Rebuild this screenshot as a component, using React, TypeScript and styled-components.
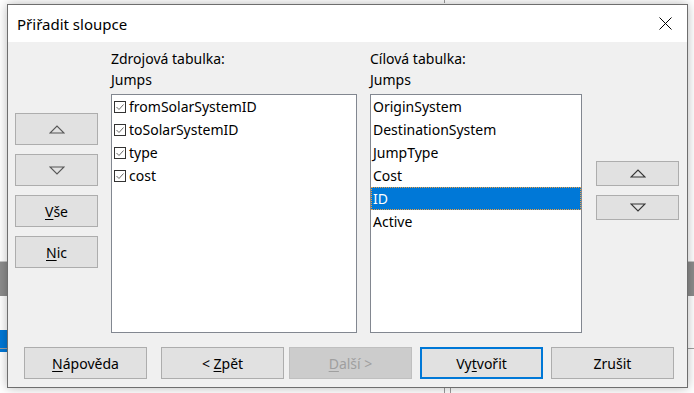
import React from "react";
import styled, { createGlobalStyle } from "styled-components";

const Global = createGlobalStyle`
  html, body { margin: 0; padding: 0; }
  body {
    width: 694px; height: 393px; overflow: hidden; background: #ffffff;
    font-family: "Noto Sans", "Segoe UI", "Liberation Sans", sans-serif;
  }
`;

const Desktop = styled.div`
  position: relative;
  width: 694px;
  height: 393px;
  overflow: hidden;
  background: #ffffff;
`;

const Backdrop = styled.div`
  display: flex;
  flex-direction: column;
  width: 100%;
  height: 100%;
`;

const VLineStrip = styled.div<{ $h: number }>`
  height: ${(p) => p.$h}px;
  display: flex;
  gap: 5px;
  padding-left: 444px;
`;

const VLine = styled.div`
  width: 1px;
  height: 100%;
  background: #9a9a9a;
`;

const Spacer = styled.div<{ $h: number }>`
  height: ${(p) => p.$h}px;
  flex: none;
`;

const HLine = styled.div<{ $c: string }>`
  height: 1px;
  background: ${(p) => p.$c};
  flex: none;
`;

const Bar = styled.div<{ $h: number; $c: string; $w?: number }>`
  height: ${(p) => p.$h}px;
  width: ${(p) => (p.$w ? `${p.$w}px` : "100%")};
  background: ${(p) => p.$c};
  flex: none;
`;

const Dialog = styled.div`
  position: absolute;
  left: 7px;
  top: 4px;
  width: 681px;
  height: 384px;
  box-sizing: border-box;
  border: 1px solid #6e6e6e;
  background: #f0f0f0;
  box-shadow: 0 0 10px rgba(0, 0, 0, 0.28);
  display: flex;
  flex-direction: column;
`;

const TitleBar = styled.div`
  height: 37px;
  flex: none;
  background: #ffffff;
  display: flex;
  align-items: center;
  justify-content: space-between;
  padding: 0 15px 0 9px;
  font-size: 15px;
  color: #000;
`;

const Body = styled.div`
  flex: 1;
  display: flex;
  flex-direction: column;
  padding: 6px 12px 7px 7px;
`;

const Columns = styled.div`
  display: flex;
  align-items: center;
  height: 285px;
`;

const SideButtons = styled.div<{ $gap: number; $ml: number }>`
  display: flex;
  flex-direction: column;
  gap: ${(p) => p.$gap}px;
  width: 83px;
  margin-left: ${(p) => p.$ml}px;
  flex: none;
`;

const TableColumn = styled.div<{ $w: number; $ml: number }>`
  width: ${(p) => p.$w}px;
  margin-left: ${(p) => p.$ml}px;
  align-self: stretch;
  display: flex;
  flex-direction: column;
  flex: none;
`;

const Label = styled.div`
  font-size: 14px;
  line-height: 21px;
  height: 21px;
  color: #000;
`;

const ListBox = styled.div`
  margin-top: 4px;
  flex: 1;
  background: #ffffff;
  border: 1px solid #828790;
  box-sizing: border-box;
  padding: 0;
  display: flex;
  flex-direction: column;
`;

const Row = styled.div<{ $sel?: boolean }>`
  height: 23px;
  flex: none;
  display: flex;
  align-items: center;
  font-size: 14px;
  padding-left: 2px;
  box-sizing: border-box;
  color: ${(p) => (p.$sel ? "#ffffff" : "#000000")};
  background: ${(p) => (p.$sel ? "#0078d7" : "transparent")};
  outline: ${(p) => (p.$sel ? "1px dotted #f0a040" : "none")};
  outline-offset: -1px;
  gap: 3px;
`;

const CheckBox = styled.span`
  width: 12px;
  height: 12px;
  box-sizing: border-box;
  border: 1px solid #333333;
  background: #ffffff;
  display: inline-flex;
  align-items: center;
  justify-content: center;
  flex: none;
`;

const Btn = styled.button<{ $h?: number; $w?: number; $ml?: number; $default?: boolean }>`
  height: ${(p) => p.$h ?? 32}px;
  width: ${(p) => (p.$w ? `${p.$w}px` : "100%")};
  margin-left: ${(p) => p.$ml ?? 0}px;
  box-sizing: border-box;
  background: #e1e1e1;
  border: ${(p) => (p.$default ? "2px solid #0078d7" : "1px solid #adadad")};
  font-family: inherit;
  font-size: 14px;
  color: #000000;
  padding: 0;
  display: flex;
  align-items: center;
  justify-content: center;
  flex: none;
  &:disabled {
    background: #cccccc;
    border-color: #bfbfbf;
    color: #9f9f9f;
  }
`;

const Mn = styled.span`
  text-decoration: underline;
  text-underline-offset: 2px;
`;

const ButtonRow = styled.div`
  display: flex;
  margin-top: 14px;
  padding-left: 9px;
`;

const Tri = ({ up, color }: { up?: boolean; color: string }) => (
  <svg width="16" height="9" viewBox="0 0 16 9">
    <polygon
      points={up ? "1,8 15,8 8,1" : "1,1 15,1 8,8"}
      fill="none"
      stroke={color}
      strokeWidth="1.1"
    />
  </svg>
);

const Check = () => (
  <svg width="10" height="10" viewBox="0 0 10 10">
    <polyline points="1.5,5 4,7.5 8.5,2.5" fill="none" stroke="#6a6a6a" strokeWidth="1" />
  </svg>
);

const CloseIcon = () => (
  <svg width="13" height="13" viewBox="0 0 13 13">
    <path d="M0.5 0.5 L12.5 12.5 M12.5 0.5 L0.5 12.5" stroke="#000" strokeWidth="1" />
  </svg>
);

const source = ["fromSolarSystemID", "toSolarSystemID", "type", "cost"];
const target = ["OriginSystem", "DestinationSystem", "JumpType", "Cost", "ID", "Active"];

export default function App() {
  return (
    <Desktop>
      <Global />
      <Backdrop>
        <VLineStrip $h={4}>
          <VLine />
        </VLineStrip>
        <Spacer $h={258} />
        <HLine $c="#c8c8c8" />
        <Bar $h={34} $c="#8c8c8c" />
        <Spacer $h={34} />
        <Bar $h={18} $c="#0078d7" $w={10} />
        <HLine $c="#a0a0a0" />
        <Bar $h={3} $c="#0078d7" $w={10} />
        <Spacer $h={36} />
        <VLineStrip $h={6}>
          <VLine />
          <VLine />
        </VLineStrip>
      </Backdrop>
      <Dialog>
        <TitleBar>
          <span>Přiřadit sloupce</span>
          <CloseIcon />
        </TitleBar>
        <Body>
          <Columns>
            <SideButtons $gap={9} $ml={0}>
              <Btn>
                <Tri up color="#555" />
              </Btn>
              <Btn>
                <Tri color="#555" />
              </Btn>
              <Btn>
                <span>
                  <Mn>V</Mn>še
                </span>
              </Btn>
              <Btn>
                <span>
                  <Mn>N</Mn>ic
                </span>
              </Btn>
            </SideButtons>
            <TableColumn $w={246} $ml={13}>
              <Label>Zdrojová tabulka:</Label>
              <Label>Jumps</Label>
              <ListBox>
                {source.map((s) => (
                  <Row key={s}>
                    <CheckBox>
                      <Check />
                    </CheckBox>
                    {s}
                  </Row>
                ))}
              </ListBox>
            </TableColumn>
            <TableColumn $w={212} $ml={13}>
              <Label>Cílová tabulka:</Label>
              <Label>Jumps</Label>
              <ListBox>
                {target.map((t) => (
                  <Row key={t} $sel={t === "ID"}>
                    {t}
                  </Row>
                ))}
              </ListBox>
            </TableColumn>
            <SideButtons $gap={9} $ml={14}>
              <Btn $h={25}>
                <Tri up color="#333" />
              </Btn>
              <Btn $h={25}>
                <Tri color="#333" />
              </Btn>
            </SideButtons>
          </Columns>
          <ButtonRow>
            <Btn $w={123}>
              <span>
                <Mn>N</Mn>ápověda
              </span>
            </Btn>
            <Btn $w={123} $ml={14}>
              <span>
                &lt; <Mn>Z</Mn>pět
              </span>
            </Btn>
            <Btn $w={123} $ml={5} disabled>
              <span>
                <Mn>D</Mn>alší &gt;
              </span>
            </Btn>
            <Btn $w={123} $ml={8} $default>
              <span>
                Vy<Mn>t</Mn>vořit
              </span>
            </Btn>
            <Btn $w={123} $ml={8}>
              Zrušit
            </Btn>
          </ButtonRow>
        </Body>
      </Dialog>
    </Desktop>
  );
}
